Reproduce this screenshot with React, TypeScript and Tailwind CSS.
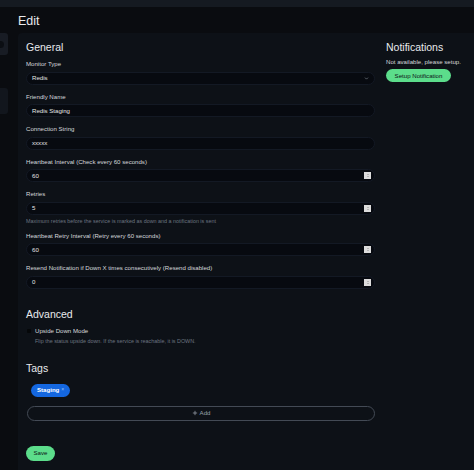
import { ChevronDown, Plus } from 'lucide-react'

const font = { fontFamily: '"Liberation Sans", Arial, sans-serif' }

function Label({ children }: { children: React.ReactNode }) {
  return <div className="mb-[3.5px] text-[6.1px] leading-[8px] text-[#d5d8dc]">{children}</div>
}

function TextField({ label, value }: { label: string; value: string }) {
  return (
    <div className="mb-[8px]">
      <Label>{label}</Label>
      <div className="flex h-[13px] items-center rounded-full border border-[#131924] bg-[#070a10] px-[5px] text-[6.1px] text-[#e6e6e6]">
        {value}
      </div>
    </div>
  )
}

function NumberField({ label, value, help }: { label: string; value: string; help?: string }) {
  return (
    <div className="mb-[8px]">
      <Label>{label}</Label>
      <div className="flex h-[13px] items-center justify-between rounded-full border border-[#131924] bg-[#070a10] pl-[5px] pr-[3px] text-[6.1px] text-[#e6e6e6]">
        <span>{value}</span>
        <span className="flex h-[7px] w-[7px] flex-col items-center justify-center gap-[1px] bg-[#dcdcdc]">
          <span className="h-0 w-0 border-x-[1.5px] border-b-[1.5px] border-x-transparent border-b-[#8a8a8a]" />
          <span className="h-0 w-0 border-x-[1.5px] border-t-[1.5px] border-x-transparent border-t-[#8a8a8a]" />
        </span>
      </div>
      {help && <div className="mt-[3px] text-[5.4px] leading-[6px] text-[#6c7480]">{help}</div>}
    </div>
  )
}

export default function App() {
  return (
    <div className="flex h-[470px] w-[474px] flex-col overflow-hidden bg-[#0a0c10]" style={font}>
      {/* Top bar */}
      <div className="h-[7px] bg-[#151a21]" />

      {/* Header */}
      <div className="flex h-[26px] items-center pl-[18px] pt-[2px]">
        <h1 className="text-[12.5px] font-medium text-[#e8eaed]">Edit</h1>
      </div>

      <div className="flex flex-1">
        {/* Sidebar stub */}
        <div className="w-[18px] shrink-0">
          <div className="flex h-[22px] w-[8px] items-center rounded-r-[3px] bg-[#181c24]">
            <div className="-ml-[3px] h-[7px] w-[7px] rounded-full bg-[#0b0e13]" />
          </div>
          <div className="mt-[33px] h-[26px] w-[8px] rounded-r-[3px] bg-[#12161d]" />
        </div>

        {/* Card */}
        <div className="flex flex-1 gap-[11px] rounded-tl-[4px] bg-[#0d1117] pl-[8px] pt-[8px]">
          <div className="w-[349px] shrink-0">
            <h2 className="mb-[6px] text-[10.5px] font-medium leading-[13px] text-[#e8eaed]">General</h2>

            <div className="mb-[8px]">
              <Label>Monitor Type</Label>
              <div className="flex h-[13px] items-center justify-between rounded-full border border-[#131924] bg-[#070a10] pl-[5px] pr-[5px] text-[6.1px] text-[#e6e6e6]">
                <span>Redis</span>
                <ChevronDown className="h-[5px] w-[5px] text-[#8a919c]" strokeWidth={3} />
              </div>
            </div>

            <TextField label="Friendly Name" value="Redis Staging" />
            <TextField label="Connection String" value="xxxxx" />
            <NumberField label="Heartbeat Interval (Check every 60 seconds)" value="60" />
            <NumberField
              label="Retries"
              value="5"
              help="Maximum retries before the service is marked as down and a notification is sent"
            />
            <NumberField label="Heartbeat Retry Interval (Retry every 60 seconds)" value="60" />
            <NumberField label="Resend Notification if Down X times consecutively (Resend disabled)" value="0" />

            <h2 className="mt-[19px] mb-[6px] text-[10.5px] font-medium leading-[13px] text-[#e8eaed]">Advanced</h2>
            <div className="flex items-start gap-[4px] pl-[1px]">
              <div className="mt-[2px] h-[4px] w-[4px] shrink-0 rounded-[1px] bg-[#050709]" />
              <div>
                <div className="text-[6.1px] leading-[8px] text-[#d5d8dc]">Upside Down Mode</div>
                <div className="mt-[3px] text-[5.4px] leading-[6px] text-[#6c7480]">
                  Flip the status upside down. If the service is reachable, it is DOWN.
                </div>
              </div>
            </div>

            <h2 className="mt-[18px] mb-[9px] text-[10.5px] font-medium leading-[13px] text-[#e8eaed]">Tags</h2>
            <div className="flex pl-[5px]">
              <span className="flex h-[13px] items-center gap-[2px] rounded-full bg-[#1467e0] px-[6px] text-[6.1px] font-bold text-white">
                Staging <span className="text-[5px] font-normal text-[#9ec0f5]">×</span>
              </span>
            </div>
            <div className="ml-[1px] mt-[9px] flex h-[15px] items-center justify-center gap-[2px] rounded-full border border-[#434a55] text-[6.1px] text-[#9aa1ab]">
              <Plus className="h-[6px] w-[6px]" strokeWidth={3} />
              <span>Add</span>
            </div>

            <button className="mt-[25px] flex h-[15px] w-[29px] items-center justify-center rounded-full bg-[#5cdd8b] text-[6.1px] font-medium text-[#0d1117]">
              Save
            </button>
          </div>

          <div className="min-w-0 flex-1">
            <h2 className="mb-[4px] text-[10.5px] font-medium leading-[13px] text-[#e8eaed]">Notifications</h2>
            <div className="whitespace-nowrap text-[6.1px] leading-[8px] text-[#d5d8dc]">Not available, please setup.</div>
            <button className="mt-[2.5px] flex h-[13.5px] w-[65px] items-center justify-center rounded-full bg-[#5cdd8b] text-[6.1px] font-medium text-[#0d1117]">
              Setup Notification
            </button>
          </div>
        </div>
      </div>
    </div>
  )
}
